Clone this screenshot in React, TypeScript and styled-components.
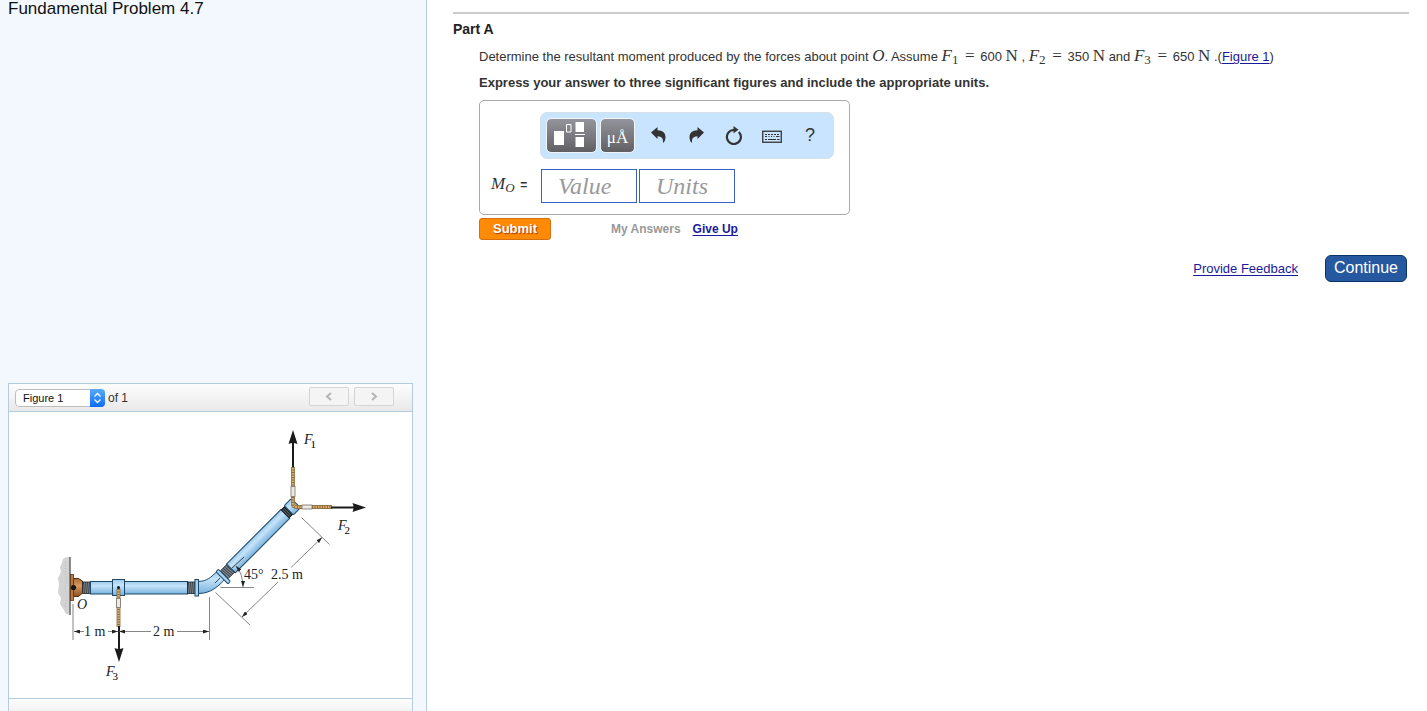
import React from 'react';
import styled, { createGlobalStyle } from 'styled-components';

const GlobalStyle = createGlobalStyle`
  * { box-sizing: border-box; }
  body {
    margin: 0;
    background: #fff;
    color: #333;
    font-family: "Liberation Sans", Arial, sans-serif;
    font-size: 13px;
    line-height: 16px;
  }
`;

const serif = '"Liberation Serif", "Times New Roman", serif';

const Page = styled.div`
  display: grid;
  grid-template-columns: 427px minmax(0, 1fr);
  min-height: 100vh;
`;

const SidePanel = styled.aside`
  display: flex;
  flex-direction: column;
  justify-content: space-between;
  padding: 0 13px 0 8px;
  background: #f3f8ff;
  border-right: 1px solid #b4cbdd;
`;

const ProblemTitle = styled.h1`
  margin: 0;
  font-size: 17px;
  line-height: 17px;
  font-weight: 400;
  color: #111;
`;

const FigurePanel = styled.section`
  border: 1px solid #b4cce0;
  border-bottom: 0;
  background: #fff;
`;

const FigureBar = styled.div`
  display: flex;
  align-items: center;
  gap: 3px;
  height: 28px;
  padding: 0 18px 0 6px;
  background: linear-gradient(#fdfdfd, #e9e9e9);
  border-bottom: 1px solid #b4cce0;
`;

const SelectBox = styled.label`
  display: grid;
  grid-template-columns: 75px 15px;
  height: 18px;
  overflow: hidden;
  border-radius: 4px;
`;

const FigureSelect = styled.select`
  grid-area: 1 / 1 / 2 / 3;
  appearance: none;
  padding: 0 0 0 7px;
  border: 1px solid #bdbdbd;
  border-radius: 4px;
  background: #fff;
  color: #111;
  font: 11px/16px "Liberation Sans", Arial, sans-serif;
`;

const SelectCap = styled.span`
  grid-area: 1 / 2 / 2 / 3;
  display: grid;
  place-items: center;
  z-index: 1;
  pointer-events: none;
  background: linear-gradient(#5aa9fb, #0a6cfb);
`;

const FigureCount = styled.span`
  flex: 1;
  font-size: 12px;
`;

const PagerButtons = styled.div`
  display: flex;
  gap: 5px;
  padding-bottom: 3px;
`;

const PagerButton = styled.button`
  display: grid;
  place-items: center;
  width: 40px;
  height: 19px;
  padding: 0;
  border: 1px solid #d5d5d5;
  border-radius: 2px;
  background: #f4f4f4;
`;

const Diagram = styled.svg`
  display: block;
  width: 100%;
  height: auto;
  font-family: ${serif};
  font-size: 14px;
  fill: #222;
`;

const FigureFooter = styled.div`
  height: 13px;
  border-top: 1px solid #b4cce0;
  background: linear-gradient(#fdfdfd, #f3f3f3);
`;

const Main = styled.main`
  padding: 12px 18px 0 26px;
`;

const Part = styled.section`
  border-top: 2px solid #ccc;
  padding-top: 7px;
`;

const PartTitle = styled.h2`
  margin: 0;
  font-size: 14px;
  line-height: 16px;
  color: #222;
`;

const PartBody = styled.div`
  padding-left: 26px;
`;

const Question = styled.p`
  margin: 0;
  padding-top: 7px;
  line-height: 26px;
`;

const Instruction = styled.p`
  margin: 0;
  padding-top: 5px;
  font-weight: 700;
  line-height: 16px;
`;

const Sym = styled.i`
  font-family: ${serif};
  font-size: 17px;
  line-height: 1;
`;

const Roman = styled.span`
  font-family: ${serif};
  font-size: 17px;
  line-height: 1;
`;

const Equals = styled(Roman)`
  margin: 0 2px 0 3px;
`;

const Sub = styled.sub`
  font-family: ${serif};
  font-size: 13px;
  line-height: 1;
  vertical-align: -3px;
`;

const TextLink = styled.a<{ $bold?: boolean }>`
  color: #1a1a9c;
  font-weight: ${(p) => (p.$bold ? 700 : 400)};
  text-underline-offset: 2px;
`;

const AnswerBox = styled.form`
  width: 371px;
  margin-top: 9px;
  padding: 11px 15px 11px 11px;
  border: 1px solid #aaa;
  border-radius: 5px;
`;

const Toolbar = styled.div`
  display: flex;
  align-items: center;
  height: 47px;
  margin-left: 49px;
  padding-left: 5px;
  border: 1px solid #d7dfe7;
  border-radius: 7px;
  background: #c9e4ff;
`;

const PaletteButton = styled.button<{ $width: number }>`
  display: grid;
  place-items: center;
  width: ${(p) => p.$width}px;
  height: 35px;
  margin-right: 3px;
  padding: 0;
  border: 1px solid #f2f5f8;
  border-radius: 5px;
  background: linear-gradient(#94949c, #606064);
  background-clip: padding-box;
  color: #fff;
  font: 17px/20px ${serif};
`;

const UnitGlyphs = styled.span`
  padding-top: 5px;
`;

const ToolGroup = styled.div`
  display: flex;
  flex: 1;
  padding: 0 0 1px 1px;
`;

const ToolButton = styled.button`
  display: grid;
  place-items: center;
  width: 38px;
  height: 30px;
  padding: 0;
  border: 0;
  background: none;
  color: #333;
  font: 18px/20px "Liberation Sans", Arial, sans-serif;
`;

const AnswerRow = styled.div`
  display: grid;
  grid-template-columns: 48px 96px 96px;
  gap: 2px;
  margin-top: 10px;
`;

const AnswerLabel = styled.label`
  line-height: 32px;
  font-weight: 700;
  white-space: nowrap;

  i, sub { font-weight: 400; }
`;

const LabelEquals = styled.span`
  margin-left: 2px;
  font-size: 12px;
`;

const AnswerInput = styled.input`
  width: 100%;
  height: 34px;
  padding: 0 16px;
  border: 1px solid #3a60cc;
  border-radius: 0;
  background: #fff;
  color: #333;
  font: italic 24px/32px ${serif};

  &::placeholder { color: #999; opacity: 1; }
`;

const Actions = styled.div`
  display: flex;
  align-items: center;
  margin-top: 3px;
  font-size: 12px;
`;

const SubmitButton = styled.button`
  width: 72px;
  height: 22px;
  margin-right: 60px;
  padding: 0;
  border: 1px solid #d56f10;
  border-radius: 3px;
  background: #ff8a05;
  color: #fff;
  font: 700 13px/18px "Liberation Sans", Arial, sans-serif;
  text-shadow: 1px 1px 1px #a33c00;
`;

const MyAnswers = styled.span`
  margin-right: 12px;
  color: #999;
  font-weight: 700;
`;

const PageFooter = styled.footer`
  display: flex;
  justify-content: flex-end;
  align-items: center;
  gap: 27px;
  margin-top: 15px;
  padding-right: 2px;
`;

const ContinueButton = styled.button`
  width: 82px;
  height: 27px;
  padding: 0 0 2px;
  border: 1px solid #0a3468;
  border-radius: 6px;
  background: #26589f;
  color: #fff;
  font: 16px/22px "Liberation Sans", Arial, sans-serif;
`;

const Chevron = ({ right }: { right?: boolean }) => (
  <svg width="8" height="9" viewBox="0 0 8 9" fill="none" stroke="#b4b4b4" strokeWidth="2">
    <path d={right ? 'M2 1l4 3.5L2 8' : 'M6 1L2 4.5 6 8'} />
  </svg>
);

const TemplateIcon = () => (
  <svg width="37" height="27" viewBox="0 0 37 27" fill="#fff">
    <path d="M1 9h10v14H1zM22.500 0h8.500v10h-8.500zM22.500 15h8.500v10h-8.500zM22 12h10v1H22z" />
    <path d="M13.500 2.500h4.500v7.500h-4.500z" fill="none" stroke="#fff" />
  </svg>
);

const CurvedArrow = ({ redo }: { redo?: boolean }) => (
  <svg width="15" height="16" viewBox="0 0 15 16" fill="#333">
    <g transform={redo ? 'translate(15 0) scale(-1 1)' : undefined}>
      <path d="M0 5.500L6.500 0v3.200c5.500 0 8 3.300 8 6.800 0 2.200-.6 3.800-1.600 5.500h-1c.6-3.500-.8-6-5.400-6.200v2.700z" />
    </g>
  </svg>
);

const ResetIcon = () => (
  <svg width="18" height="19" viewBox="0 0 18 19">
    <path d="M13.800 6A7 7 0 1 1 9 4" fill="none" stroke="#333" strokeWidth="2.200" />
    <path d="M8.500 0l5 3.800-5 3.400z" fill="#333" />
  </svg>
);

const KeyboardIcon = () => (
  <svg width="20" height="16" viewBox="0 0 20 16" fill="none" stroke="#333">
    <rect x=".75" y="4.250" width="18.500" height="11" strokeWidth="1.300" />
    <path d="M3 7.500h14.500" strokeDasharray="2 1" />
    <path d="M3 9.500h2M6.500 9.500h1M9 9.500h1M11.500 9.500h1M14 9.500h3.500" />
    <path d="M3 12.500h2M6 12.500h8M15 12.500h2.500" />
  </svg>
);

const HorizontalThread = ({ x, width }: { x: number; width: number }) => (
  <g>
    <rect x={x} y="582" width={width} height="11.500" fill="#7c868d" stroke="#222" strokeWidth=".8" />
    {Array.from({ length: Math.floor(width / 2) }, (_, i) => (
      <path key={i} d={`M${x + 1 + i * 2} 582l1 11.500`} stroke="#2d3235" strokeWidth=".8" />
    ))}
  </g>
);

const Rope = ({ d }: { d: string }) => (
  <g fill="none">
    <path d={d} stroke="#80602f" strokeWidth="3.800" />
    <path d={d} stroke="#d6b078" strokeWidth="2.600" />
    <path d={d} stroke="#8a6835" strokeWidth="2.600" strokeDasharray="1 1.500" />
  </g>
);

const ForceLabel = ({ x, y, index }: { x: number; y: number; index: number }) => (
  <text x={x} y={y} fontStyle="italic">
    F
    <tspan dx="-2" dy="4" fontSize="11" fontStyle="normal" fill="#000">{index}</tspan>
  </text>
);

const PipeDiagram = () => (
  <Diagram viewBox="9 412 403 286" role="img" aria-label="Pipe assembly with three forces">
    <defs>
      <linearGradient id="pipe" x1="0" y1="0" x2="0" y2="1">
        <stop offset="0" stopColor="#9ccaec" />
        <stop offset=".35" stopColor="#c5e4fa" />
        <stop offset="1" stopColor="#7ab2de" />
      </linearGradient>
      <linearGradient id="brass" x1="0" y1="0" x2="0" y2="1">
        <stop offset="0" stopColor="#a86a35" />
        <stop offset=".4" stopColor="#d99a60" />
        <stop offset="1" stopColor="#8a4f22" />
      </linearGradient>
      <marker id="tip" markerWidth="6" markerHeight="4" refX="6" refY="2" orient="auto-start-reverse" markerUnits="userSpaceOnUse">
        <path d="M0 0l6 2-6 2z" fill="#222" />
      </marker>
    </defs>

    <path d="M70 557q-8-1-8 6l-2 4 1 5-3 6 1 7-1 8 3 5-1 6 4 6q2 6 6 4z" fill="#d3d3d3" />
    <path d="M66 562l-1 8 2 9-2 9 2 10-2 11" fill="none" stroke="#bdbdbd" strokeDasharray="1 2" />
    <path d="M70 557v58" stroke="#666" strokeWidth="1.500" />

    <path d="M73.500 578.500h5l4 2.500v12l-4 3.500h-5z" fill="url(#brass)" stroke="#4f2c10" />
    <rect x="70.500" y="574.500" width="3" height="26" fill="#bd7840" stroke="#5a3516" strokeWidth=".8" />
    <circle cx="73.500" cy="587.500" r="2.600" fill="#161616" />

    <HorizontalThread x={82.500} width={8} />
    <rect x="90.500" y="581.500" width="97" height="12.500" fill="url(#pipe)" stroke="#1d4868" />
    <rect x="112.500" y="579.500" width="12" height="16" fill="url(#pipe)" stroke="#1d4868" />
    <HorizontalThread x={187.500} width={8} />
    <path d="M198.500 581.500c9-.5 12-4 19-10.500l8 7.500c-7 8-15 15-27 15z" fill="url(#pipe)" stroke="#1d4868" />
    <rect x="195" y="579.500" width="3.500" height="16.500" fill="#a8d3f2" stroke="#1d4868" />

    <g transform="translate(223 576) rotate(-45)">
      <rect x="2" y="-5.500" width="10" height="11" fill="#7c868d" stroke="#222" strokeWidth=".8" />
      <path d="M3.500-5.500l1 11M5.500-5.500l1 11M7.500-5.500l1 11M9.500-5.500l1 11" stroke="#2d3235" strokeWidth=".8" />
      <rect x="11" y="-6" width="77" height="12.500" fill="url(#pipe)" stroke="#1d4868" />
      <rect x="88" y="-5.500" width="5" height="11" fill="#5f686e" stroke="#111" />
      <path d="M90-5.500v11M92-5.500v11" stroke="#16191b" />
      <rect x="93" y="-6.500" width="10" height="13" rx="1.500" fill="url(#pipe)" stroke="#1d4868" />
      <rect x="-2" y="-8" width="3.500" height="17" rx="1" fill="#a8d3f2" stroke="#1d4868" />
    </g>

    <Rope d="M293 467v37q0 3 4 3h35" />
    <rect x="291" y="486.500" width="4" height="10" fill="#eeeae0" stroke="#77736b" strokeWidth=".8" />
    <rect x="302" y="505" width="10" height="4" fill="#eeeae0" stroke="#77736b" strokeWidth=".8" />
    <Rope d="M118.500 589v38" />
    <rect x="116.500" y="598.500" width="4" height="9" fill="#eeeae0" stroke="#77736b" strokeWidth=".8" />
    <circle cx="118.500" cy="587.500" r="1.500" fill="#111" />

    <path d="M293 467v-26M331 507.500h25M119 626v25" stroke="#1b1b1b" strokeWidth="2" />
    <path d="M293 430l4.500 14q-4.500-2-9 0zM366 507.500l-13.500 4.500q2-4.500 0-9zM119 662l-4.500-14q4.500 2 9 0z" fill="#1b1b1b" />

    <g fill="none" stroke="#777" strokeWidth=".9">
      <path d="M73 604v36M209.500 597v43M301.500 517.500l28 27M215.500 592.500l34.500 32.500M220.500 587.500h33.500" />
      <path d="M215 583l5-5M232 568l12-11" stroke="#333" />
      <path d="M84 631.500H74" markerEnd="url(#tip)" />
      <path d="M108 631.500h10" markerEnd="url(#tip)" />
      <path d="M151 631.500h-32" markerEnd="url(#tip)" />
      <path d="M177 631.500h32" markerEnd="url(#tip)" />
      <path d="M291 567.500l31-30" markerEnd="url(#tip)" />
      <path d="M278 582l-36 35" markerEnd="url(#tip)" />
      <path d="M236 566q7 8 7 21" markerStart="url(#tip)" markerEnd="url(#tip)" />
    </g>

    <ForceLabel x={304} y={444} index={1} />
    <ForceLabel x={338} y={530} index={2} />
    <ForceLabel x={106} y={676} index={3} />
    <text x="77" y="609" fontStyle="italic">O</text>
    <text x="84" y="636">1 m</text>
    <text x="153" y="636">2 m</text>
    <text x="244" y="579">45°</text>
    <text x="271" y="579">2.5 m</text>
  </Diagram>
);

const Force = ({ index, value }: { index: number; value: number }) => (
  <>
    <Sym>F</Sym>
    <Sub>{index}</Sub> <Equals>=</Equals> {value} <Roman>N</Roman>
  </>
);

export default function App() {
  return (
    <>
      <GlobalStyle />
      <Page>
        <SidePanel>
          <ProblemTitle>Fundamental Problem 4.7</ProblemTitle>
          <FigurePanel>
            <FigureBar>
              <SelectBox>
                <FigureSelect aria-label="Figure">
                  <option>Figure 1</option>
                </FigureSelect>
                <SelectCap>
                  <svg width="9" height="12" viewBox="0 0 9 12" fill="none" stroke="#fff" strokeWidth="1.300">
                    <path d="M1.500 4.500l3-3 3 3M1.500 7.500l3 3 3-3" />
                  </svg>
                </SelectCap>
              </SelectBox>
              <FigureCount>of 1</FigureCount>
              <PagerButtons>
                <PagerButton type="button" aria-label="Previous figure"><Chevron /></PagerButton>
                <PagerButton type="button" aria-label="Next figure"><Chevron right /></PagerButton>
              </PagerButtons>
            </FigureBar>
            <PipeDiagram />
            <FigureFooter />
          </FigurePanel>
        </SidePanel>

        <Main>
          <Part>
            <PartTitle>Part A</PartTitle>
            <PartBody>
              <Question>
                Determine the resultant moment produced by the forces about point <Sym>O</Sym>. Assume{' '}
                <Force index={1} value={600} /> , <Force index={2} value={350} /> and{' '}
                <Force index={3} value={650} /> .(<TextLink href="#figure">Figure 1</TextLink>)
              </Question>
              <Instruction>
                Express your answer to three significant figures and include the appropriate units.
              </Instruction>
              <AnswerBox onSubmit={(e) => e.preventDefault()}>
                <Toolbar>
                  <PaletteButton type="button" $width={51} aria-label="Templates"><TemplateIcon /></PaletteButton>
                  <PaletteButton type="button" $width={35}><UnitGlyphs>μÅ</UnitGlyphs></PaletteButton>
                  <ToolGroup>
                    <ToolButton type="button" aria-label="Undo"><CurvedArrow /></ToolButton>
                    <ToolButton type="button" aria-label="Redo"><CurvedArrow redo /></ToolButton>
                    <ToolButton type="button" aria-label="Reset"><ResetIcon /></ToolButton>
                    <ToolButton type="button" aria-label="Keyboard"><KeyboardIcon /></ToolButton>
                    <ToolButton type="button">?</ToolButton>
                  </ToolGroup>
                </Toolbar>
                <AnswerRow>
                  <AnswerLabel htmlFor="value">
                    <Sym>M</Sym><Sub><i>O</i></Sub> <LabelEquals>=</LabelEquals>
                  </AnswerLabel>
                  <AnswerInput id="value" placeholder="Value" />
                  <AnswerInput aria-label="Units" placeholder="Units" />
                </AnswerRow>
              </AnswerBox>
              <Actions>
                <SubmitButton type="button">Submit</SubmitButton>
                <MyAnswers>My Answers</MyAnswers>
                <TextLink $bold href="#give-up">Give Up</TextLink>
              </Actions>
            </PartBody>
          </Part>
          <PageFooter>
            <TextLink href="#feedback">Provide Feedback</TextLink>
            <ContinueButton type="button">Continue</ContinueButton>
          </PageFooter>
        </Main>
      </Page>
    </>
  );
}
